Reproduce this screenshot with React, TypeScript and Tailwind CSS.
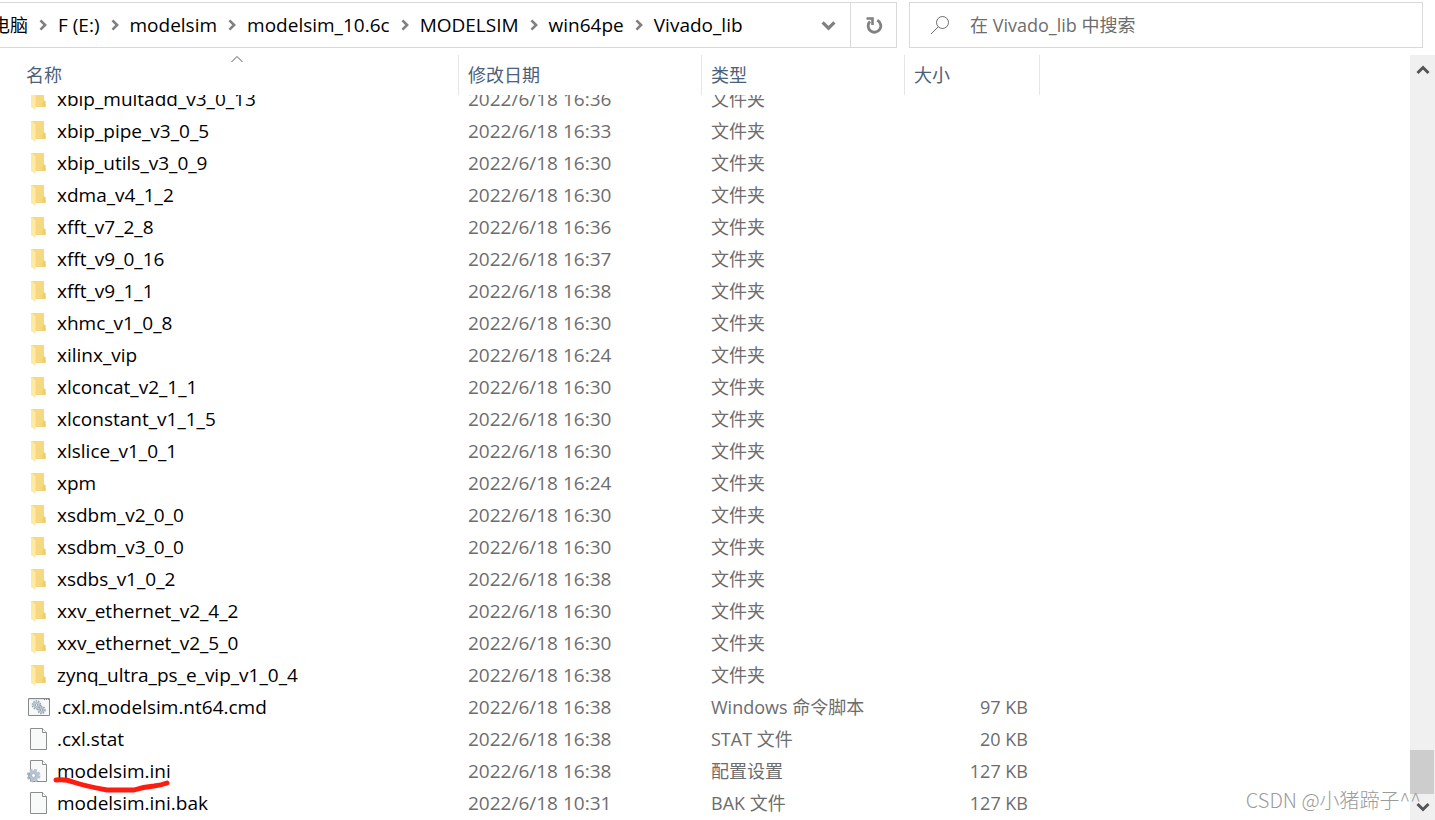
import { useLayoutEffect, useRef } from 'react';
import type { ReactNode } from 'react';

type Kind = 'folder' | 'cmd' | 'file' | 'ini';

type Entry = {
  name: string;
  date: string;
  kind: Kind;
  type: string;
  size?: string;
};

const folder = (name: string, time: string): Entry => ({
  name,
  date: `2022/6/18 ${time}`,
  kind: 'folder',
  type: '文件夹',
});

const ENTRIES: Entry[] = [
  folder('xbip_multadd_v3_0_13', '16:36'),
  folder('xbip_pipe_v3_0_5', '16:33'),
  folder('xbip_utils_v3_0_9', '16:30'),
  folder('xdma_v4_1_2', '16:30'),
  folder('xfft_v7_2_8', '16:36'),
  folder('xfft_v9_0_16', '16:37'),
  folder('xfft_v9_1_1', '16:38'),
  folder('xhmc_v1_0_8', '16:30'),
  folder('xilinx_vip', '16:24'),
  folder('xlconcat_v2_1_1', '16:30'),
  folder('xlconstant_v1_1_5', '16:30'),
  folder('xlslice_v1_0_1', '16:30'),
  folder('xpm', '16:24'),
  folder('xsdbm_v2_0_0', '16:30'),
  folder('xsdbm_v3_0_0', '16:30'),
  folder('xsdbs_v1_0_2', '16:38'),
  folder('xxv_ethernet_v2_4_2', '16:30'),
  folder('xxv_ethernet_v2_5_0', '16:30'),
  folder('zynq_ultra_ps_e_vip_v1_0_4', '16:38'),
  { name: '.cxl.modelsim.nt64.cmd', date: '2022/6/18 16:38', kind: 'cmd', type: 'Windows 命令脚本', size: '97 KB' },
  { name: '.cxl.stat', date: '2022/6/18 16:38', kind: 'file', type: 'STAT 文件', size: '20 KB' },
  { name: 'modelsim.ini', date: '2022/6/18 16:38', kind: 'ini', type: '配置设置', size: '127 KB' },
  { name: 'modelsim.ini.bak', date: '2022/6/18 10:31', kind: 'file', type: 'BAK 文件', size: '127 KB' },
];

const CRUMBS = ['F (E:)', 'modelsim', 'modelsim_10.6c', 'MODELSIM', 'win64pe', 'Vivado_lib'];

function Chevron({ className }: { className: string }) {
  return (
    <svg viewBox="0 0 14 14" className={className} fill="none" stroke="currentColor" strokeWidth="3" aria-hidden>
      <path d="M1.5 4 7 9.5 12.5 4" />
    </svg>
  );
}

function Gear({ cx, cy, r }: { cx: number; cy: number; r: number }) {
  return (
    <g>
      <circle cx={cx} cy={cy} r={r} fill="none" stroke="#93a2af" strokeWidth="1.6" strokeDasharray="1.5 1" />
      <circle cx={cx} cy={cy} r={r - 1} fill="#d3dde5" stroke="#9aabb9" strokeWidth="0.8" />
      <circle cx={cx} cy={cy} r={r / 3} fill="#f7f9fa" stroke="#7d8c99" strokeWidth="0.8" />
    </g>
  );
}

function EntryIcon({ kind }: { kind: Kind }) {
  if (kind === 'folder') {
    return (
      <svg viewBox="0 0 24 24" className="size-6 shrink-0" aria-hidden>
        <path d="M4 2h13v11l1.500 1.500V20H7z" fill="#f6d97e" />
        <path d="M16 14h2.500v6H15z" fill="#efcd6b" />
        <path d="M4 2l4.500 3v18L4 20z" fill="#ffe9a4" />
      </svg>
    );
  }
  if (kind === 'cmd') {
    return (
      <svg viewBox="0 0 24 24" className="size-6 shrink-0" aria-hidden>
        <path d="M1.500 3.500h21v17h-21z" fill="#f7f8f8" stroke="#85898c" />
        <path d="M2 4.500h20" stroke="#dfe3e6" />
        <path d="M17 4.500h1M19 4.500h1M21 4.500h1" stroke="#7f8589" />
        <Gear cx={9.5} cy={10} r={4} />
        <Gear cx={14.5} cy={15} r={3.4} />
      </svg>
    );
  }
  return (
    <svg viewBox="0 0 24 24" className="size-6 shrink-0 overflow-visible" aria-hidden>
      <path d="M3.500 1.500h12l4 4v17h-16z" fill="#f8f9f9" stroke="#8a8c8d" />
      <path d="M15.500 1.500v4h4" fill="#fff" stroke="#8a8c8d" />
      {kind === 'ini' && (
        <g fill="none">
          <circle cx="6.500" cy="16.500" r="5.600" stroke="#b3c3cf" strokeWidth="2.600" strokeDasharray="2.700 1.700" />
          <circle cx="6.500" cy="16.500" r="3.700" fill="#fff" stroke="#b3c3cf" strokeWidth="3" />
          <path d="M3.500 20.500a5 5 0 0 1-1-6.500" stroke="#8b9ba8" />
          <circle cx="6.500" cy="16.500" r="2" stroke="#8999a6" strokeWidth="0.700" />
        </g>
      )}
    </svg>
  );
}

function HeaderCell({ children }: { children: ReactNode }) {
  return (
    <th
      scope="col"
      className="sticky top-0 z-10 h-10 border-r border-[#e5e5e5] bg-white p-0 text-left text-lg font-normal text-[#4c607a]"
    >
      {children}
    </th>
  );
}

function AddressBar() {
  return (
    <header className="flex gap-3 pt-0.5 pr-3">
      <div className="flex h-[46px] w-[897px] border border-l-0 border-[#d9d9d9]">
        <nav aria-label="路径" className="flex min-w-0 flex-1 items-center overflow-hidden text-[19px] whitespace-nowrap">
          <a href="#" className="-ml-2 text-lg">电脑</a>
          {CRUMBS.map((crumb) => (
            <span key={crumb} className="flex items-center">
              <Chevron className="mx-[9px] size-3 -rotate-90 text-[#808080]" />
              <a href="#">{crumb}</a>
            </span>
          ))}
        </nav>
        <button type="button" aria-label="以前的位置" className="grid w-11 place-items-center text-[#808080]">
          <Chevron className="size-[15px]" />
        </button>
        <button
          type="button"
          aria-label="刷新"
          className="grid w-[46px] place-items-center border-l border-[#d9d9d9] text-[#808080]"
        >
          <svg viewBox="0 0 18 18" className="size-[18px]" fill="none" stroke="currentColor" aria-hidden>
            <path d="M12.300 4.300A6.300 6.300 0 1 1 5 5.500" strokeWidth="2.800" />
            <path d="M1.500 2.500h6v6.500" strokeWidth="2.600" />
          </svg>
        </button>
      </div>
      <label className="flex h-[46px] flex-1 items-center gap-5 border border-[#d9d9d9] pl-5 text-[#6d6d6d]">
        <svg viewBox="0 0 20 20" className="size-5 shrink-0" fill="none" stroke="currentColor" aria-hidden>
          <circle cx="12.500" cy="7.500" r="6" />
          <path d="M8.300 11.800 1 19" />
        </svg>
        <input
          type="text"
          aria-label="搜索"
          placeholder="在 Vivado_lib 中搜索"
          className="min-w-0 flex-1 text-lg outline-none placeholder:text-[#6d6d6d]"
        />
      </label>
    </header>
  );
}

function FileList() {
  const ref = useRef<HTMLDivElement>(null);

  // Rest slightly past a row boundary, so the top row slides under the header.
  useLayoutEffect(() => {
    if (ref.current) ref.current.scrollTop = 12;
  }, []);

  return (
    <div ref={ref} className="min-w-0 flex-1 overflow-hidden">
      <table className="mb-4 w-full table-fixed border-separate border-spacing-0">
        <colgroup>
          <col className="w-[459px]" />
          <col className="w-[243px]" />
          <col className="w-[203px]" />
          <col className="w-[135px]" />
          <col />
        </colgroup>
        <thead>
          <tr>
            <HeaderCell>
              <button type="button" className="pl-[26px]">名称</button>
              <svg
                viewBox="0 0 16 8"
                className="absolute top-0 left-1/2 h-2 w-4"
                fill="none"
                stroke="#5a5a5a"
                aria-hidden
              >
                <path d="M2.500 7 8 1.500 13.500 7" />
              </svg>
            </HeaderCell>
            <HeaderCell>
              <button type="button" className="pl-[9px]">修改日期</button>
            </HeaderCell>
            <HeaderCell>
              <button type="button" className="pl-[9px]">类型</button>
            </HeaderCell>
            <HeaderCell>
              <button type="button" className="pl-[9px]">大小</button>
            </HeaderCell>
            <td className="sticky top-0 z-10 bg-white" />
          </tr>
        </thead>
        <tbody className="whitespace-nowrap text-[#6d6d6d]">
          {ENTRIES.map((entry) => (
            <tr key={entry.name}>
              <td className="h-8 p-0 pl-[27px] text-[19px] leading-8 text-black">
                <div className="flex h-8 items-center gap-[6px]">
                  <EntryIcon kind={entry.kind} />
                  <span className="relative">
                    {entry.name}
                    {entry.kind === 'ini' && (
                      <svg
                        viewBox="0 0 118 16"
                        className="absolute top-[22px] -left-1 h-4 w-[118px]"
                        fill="none"
                        stroke="#fd1d10"
                        strokeWidth="5"
                        strokeLinecap="round"
                        strokeLinejoin="round"
                        aria-hidden
                      >
                        <path d="M3 3q10-1 17 2 12 4 34 8h27q9-3 20-4 8-1 13-3" />
                      </svg>
                    )}
                  </span>
                </div>
              </td>
              <td className="h-8 p-0 pl-[9px] text-[19px] leading-8">{entry.date}</td>
              <td className="h-8 p-0 pl-[9px] text-lg leading-8">{entry.type}</td>
              <td className="h-8 p-0 pr-3 text-right text-lg leading-8">{entry.size}</td>
              <td />
            </tr>
          ))}
        </tbody>
      </table>
    </div>
  );
}

function ScrollBar() {
  return (
    <div className="flex w-[25px] flex-col bg-[#f0f0f0] text-[#555]">
      <button type="button" aria-label="向上滚动" className="grid h-[30px] place-items-center">
        <Chevron className="size-3.5 -scale-y-100" />
      </button>
      <div className="flex flex-1 flex-col justify-end">
        <div className="mr-px h-11 bg-[#cdcdcd]" />
      </div>
      <button type="button" aria-label="向下滚动" className="grid h-[26px] place-items-center">
        <Chevron className="size-3.5" />
      </button>
    </div>
  );
}

export default function App() {
  return (
    <div className="relative flex h-screen flex-col overflow-hidden bg-white font-['Open_Sans','Noto_Sans_CJK_SC',sans-serif] text-black">
      <AddressBar />
      <main className="flex min-h-0 flex-1 pt-[7px]">
        <FileList />
        <ScrollBar />
      </main>
      <p className="absolute right-3.5 bottom-1.5 font-['Noto_Sans_CJK_SC',sans-serif] text-xl font-light text-[#9b9b9b]">
        CSDN @小猪蹄子^^
      </p>
    </div>
  );
}
